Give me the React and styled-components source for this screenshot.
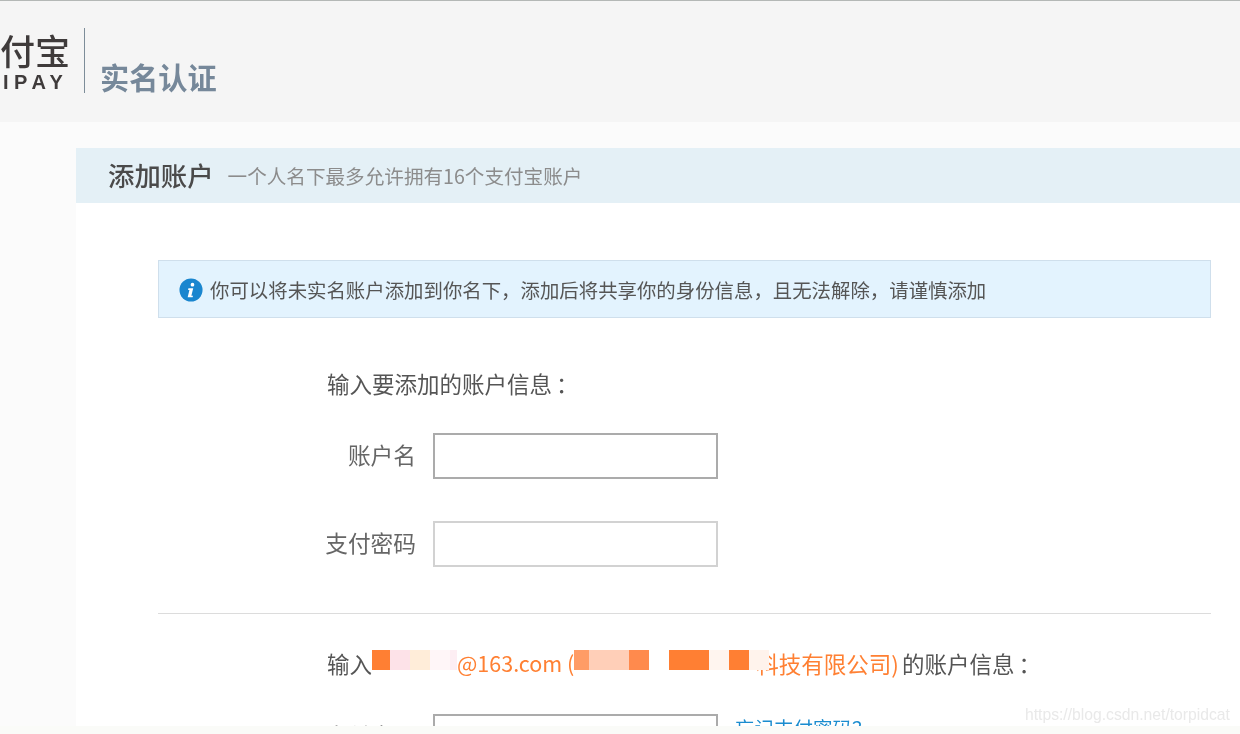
import React from "react";
import styled, { createGlobalStyle } from "styled-components";

const Global = createGlobalStyle`
  html, body { margin: 0; padding: 0; background: #fbfbfb; }
  body { font-family: "Noto Sans CJK SC", "Liberation Sans", sans-serif; overflow: hidden; }
  #root { width: 1240px; height: 734px; overflow: hidden; }
`;

const Page = styled.div`
  position: relative;
  width: 1240px;
  height: 734px;
  overflow: hidden;
  background: #fbfbfb;
  filter: blur(0.45px);
`;

const Header = styled.header`
  height: 121px;
  box-sizing: content-box;
  border-top: 1px solid #b4b8b6;
  background: #f5f5f5;
  display: flex;
  align-items: flex-start;
  overflow: hidden;
`;

const Logo = styled.div`
  width: 84px;
  height: 64px;
  margin-top: 27px;
  flex: none;
  overflow: hidden;
  color: #3f3b3b;
`;

const LogoCn = styled.div`
  font-size: 35px;
  line-height: 44px;
  font-weight: 500;
  margin-left: -35px;
  white-space: nowrap;
`;

const LogoEn = styled.div`
  font-family: "Liberation Sans", sans-serif;
  font-size: 20px;
  font-weight: 700;
  line-height: 20px;
  letter-spacing: 5.5px;
  margin-left: -34.6px;
  white-space: nowrap;
`;

const Divider = styled.div`
  width: 1px;
  height: 65px;
  margin-top: 27px;
  background: #7d8d99;
  flex: none;
`;

const Product = styled.div`
  margin: 55px 0 0 15px;
  font-size: 29.2px;
  line-height: 40px;
  font-weight: 700;
  color: #76889a;
  white-space: nowrap;
`;

const Panel = styled.section`
  margin: 26px 0 0 76px;
  background: #fff;
  height: 640px;
`;

const PanelHead = styled.div`
  height: 55px;
  background: #e4f0f6;
  padding-left: 32px;
  display: flex;
  align-items: center;
  gap: 14px;
`;

const PanelTitle = styled.h2`
  margin: 0 0 2px;
  font-size: 26.4px;
  font-weight: 500;
  color: #4a4a4a;
  white-space: nowrap;
`;

const PanelSub = styled.span`
  font-size: 19.6px;
  color: #8c8c8c;
  white-space: nowrap;
`;

const PanelBody = styled.div`
  padding: 57px 29px 0 82px;
`;

const Notice = styled.div`
  height: 58px;
  box-sizing: border-box;
  border: 1px solid #cfdfec;
  background: #e3f3fe;
  display: flex;
  align-items: center;
  gap: 7px;
  padding-left: 20px;
  font-size: 19.42px;
  color: #555;
  white-space: nowrap;
`;

const Form = styled.div`
  padding-left: 167px;
`;

const Heading = styled.div`
  font-size: 22.5px;
  line-height: 32px;
  color: #555;
  white-space: nowrap;
  margin-top: ${(p) => p.$top}px;
  margin-bottom: ${(p) => p.$bottom}px;
  margin-left: 2px;
  display: flex;
  align-items: center;
`;

const Colon = styled.span`
  margin-left: 4px;
`;

const Row = styled.div`
  display: flex;
  align-items: center;
  margin-bottom: ${(p) => p.$bottom || 0}px;
`;

const Label = styled.label`
  width: 91px;
  margin-right: 17px;
  padding-bottom: 4px;
  text-align: right;
  font-size: 22.7px;
  color: #666;
  white-space: nowrap;
`;

const Input = styled.input`
  width: 285px;
  height: 46px;
  box-sizing: border-box;
  padding: 0 8px;
  background: #fff;
  border: ${(p) => (p.$focus ? "2px solid #ababab" : "2px solid #d2d2d2")};
  outline: none;
  flex: none;
`;

const Forgot = styled.a`
  margin-left: 17px;
  font-size: 19.5px;
  color: #1a8ccf;
  white-space: nowrap;
  align-self: flex-start;
  line-height: 28px;
`;

const Rule = styled.hr`
  margin: 46px 0 0;
  border: 0;
  height: 1px;
  background: #dcdcdc;
`;

const Accent = styled.span`
  color: #ff8033;
  font-size: ${(p) => p.$size || "inherit"};
`;

const Tail = styled.span`
  margin-left: 3px;
`;

const Mosaic = styled.span`
  display: inline-flex;
  height: 20px;
  flex: none;
  margin: ${(p) => p.$margin};
  position: relative;
  z-index: 1;
  align-self: flex-start;
  margin-top: 3px;
`;

const Cell = styled.i`
  display: block;
  height: 20px;
`;

const Strip = styled.div`
  position: absolute;
  left: 0;
  right: 0;
  bottom: 0;
  height: 8px;
  background: #fafbf8;
`;

const Watermark = styled.span`
  position: absolute;
  left: 1025px;
  top: 705px;
  font-family: "Liberation Sans", sans-serif;
  font-size: 15.7px;
  line-height: 20px;
  color: #e9e9e9;
  white-space: nowrap;
`;

const InfoGlyph = styled.svg`
  flex: none;
  margin-top: 2px;
`;

const InfoIcon = () => (
  <InfoGlyph width="24" height="24" viewBox="0 0 26 26">
    <circle cx="13" cy="13" r="12.5" fill="#1a86cf" />
    <circle cx="14.6" cy="7.2" r="2" fill="#fff" />
    <path d="M10.2 11.2h5.2l-2 8h1.8l-.5 1.7H9.4l1.9-8H9.8z" fill="#fff" />
  </InfoGlyph>
);

const first = [
  ["#ff7f33", 18], ["#fde2e8", 20], ["#ffedd9", 20], ["#fff6f8", 20], ["#fdeef3", 7],
];
const second = [
  ["#ff9c66", 15], ["#ffcfb8", 40], ["#ff8a4d", 20], ["#ffffff", 20], ["#ff7f33", 40],
  ["#fff5ef", 20], ["#ff7f33", 20], ["#fff3ec", 20],
];

const Blocks = ({ cells, margin }) => (
  <Mosaic $margin={margin}>
    {cells.map(([c, w], i) => (
      <Cell key={i} style={{ background: c, width: w }} />
    ))}
  </Mosaic>
);

export default function App() {
  return (
    <Page>
      <Global />
      <Header>
        <Logo>
          <LogoCn>支付宝</LogoCn>
          <LogoEn>ALIPAY</LogoEn>
        </Logo>
        <Divider />
        <Product>实名认证</Product>
      </Header>
      <Panel>
        <PanelHead>
          <PanelTitle>添加账户</PanelTitle>
          <PanelSub>一个人名下最多允许拥有16个支付宝账户</PanelSub>
        </PanelHead>
        <PanelBody>
          <Notice>
            <InfoIcon />
            你可以将未实名账户添加到你名下，添加后将共享你的身份信息，且无法解除，请谨慎添加
          </Notice>
          <Form>
            <Heading $top={49} $bottom={34}>
              输入要添加的账户信息<Colon>：</Colon>
            </Heading>
            <Row $bottom={42}>
              <Label>账户名</Label>
              <Input $focus />
            </Row>
            <Row>
              <Label>支付密码</Label>
              <Input />
            </Row>
          </Form>
          <Rule />
          <Form>
            <Heading $top={33} $bottom={35}>
              输入
              <Blocks cells={first} margin="0" />
              <Accent $size="21.5px">@163.com (</Accent>
              <Blocks cells={second} margin="0 -13px 0 0" />
              <Accent>科技有限公司)</Accent>
              <Tail>的账户信息</Tail>
              <Colon>：</Colon>
            </Heading>
            <Row>
              <Label>支付密码</Label>
              <Input $focus />
              <Forgot>忘记支付密码？</Forgot>
            </Row>
          </Form>
        </PanelBody>
      </Panel>
      <Strip />
      <Watermark>https://blog.csdn.net/torpidcat</Watermark>
    </Page>
  );
}
